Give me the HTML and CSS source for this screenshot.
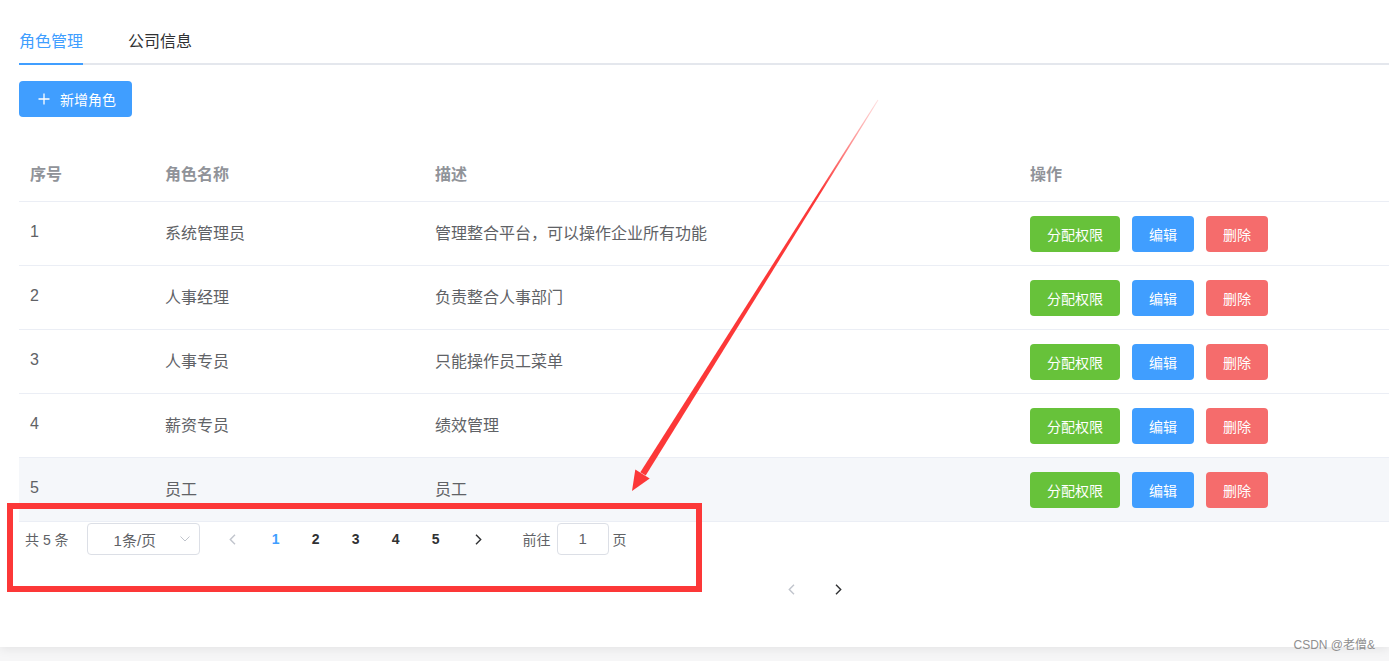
FILE: index.html
```html
<!DOCTYPE html>
<html>
<head>
  <title>角色管理</title>
  <link rel="stylesheet" href="styles.css">
</head>
<body>
  <div class="page">
    <div class="tabs">
      <div class="tab active">角色管理</div>
      <div class="tab">公司信息</div>
    </div>

    <div class="pane">
      <button class="btn btn-primary btn-add">
        <svg class="plus" width="12" height="12" viewBox="0 0 12 12"><path d="M6 0.5V11.5M0.5 6H11.5" stroke="#fff" stroke-width="1.3" fill="none"/></svg>
        新增角色
      </button>

      <table class="role-table">
        <colgroup>
          <col style="width:135px">
          <col style="width:270px">
          <col style="width:595px">
          <col style="width:370px">
        </colgroup>
        <thead>
          <tr><th>序号</th><th>角色名称</th><th>描述</th><th>操作</th></tr>
        </thead>
        <tbody>
          <tr>
            <td>1</td><td>系统管理员</td><td>管理整合平台，可以操作企业所有功能</td>
            <td><div class="ops"><button class="btn btn-success">分配权限</button><button class="btn btn-primary">编辑</button><button class="btn btn-danger">删除</button></div></td>
          </tr>
          <tr>
            <td>2</td><td>人事经理</td><td>负责整合人事部门</td>
            <td><div class="ops"><button class="btn btn-success">分配权限</button><button class="btn btn-primary">编辑</button><button class="btn btn-danger">删除</button></div></td>
          </tr>
          <tr>
            <td>3</td><td>人事专员</td><td>只能操作员工菜单</td>
            <td><div class="ops"><button class="btn btn-success">分配权限</button><button class="btn btn-primary">编辑</button><button class="btn btn-danger">删除</button></div></td>
          </tr>
          <tr>
            <td>4</td><td>薪资专员</td><td>绩效管理</td>
            <td><div class="ops"><button class="btn btn-success">分配权限</button><button class="btn btn-primary">编辑</button><button class="btn btn-danger">删除</button></div></td>
          </tr>
          <tr class="hover">
            <td>5</td><td>员工</td><td>员工</td>
            <td><div class="ops"><button class="btn btn-success">分配权限</button><button class="btn btn-primary">编辑</button><button class="btn btn-danger">删除</button></div></td>
          </tr>
        </tbody>
      </table>

      <div class="pager">
        <span class="total">共 5 条</span>
        <div class="sizes">
          <span>1条/页</span>
          <svg class="caret" width="10" height="6" viewBox="0 0 10 6"><path d="M0.5 0.5L5 5L9.5 0.5" stroke="#c0c4cc" stroke-width="1" fill="none"/></svg>
        </div>
        <button class="pg-btn prev disabled">
          <svg width="7" height="11" viewBox="0 0 7 11"><path d="M6 0.8L1.3 5.5L6 10.2" stroke="currentColor" stroke-width="1.4" fill="none"/></svg>
        </button>
        <ul class="pages">
          <li class="active">1</li>
          <li>2</li>
          <li>3</li>
          <li>4</li>
          <li>5</li>
        </ul>
        <button class="pg-btn next">
          <svg width="7" height="11" viewBox="0 0 7 11"><path d="M1 0.8L5.7 5.5L1 10.2" stroke="currentColor" stroke-width="1.4" fill="none"/></svg>
        </button>
        <span class="jump">前往<span class="jump-input">1</span>页</span>
      </div>

      <div class="pager pager-empty">
        <button class="pg-btn prev disabled">
          <svg width="7" height="11" viewBox="0 0 7 11"><path d="M6 0.8L1.3 5.5L6 10.2" stroke="currentColor" stroke-width="1.4" fill="none"/></svg>
        </button>
        <button class="pg-btn next">
          <svg width="7" height="11" viewBox="0 0 7 11"><path d="M1 0.8L5.7 5.5L1 10.2" stroke="currentColor" stroke-width="1.4" fill="none"/></svg>
        </button>
      </div>
    </div>
  </div>

  <div class="watermark">CSDN @老僧&amp;</div>

  <!-- annotation drawn over the screenshot -->
  <svg class="annot" width="1389" height="661" viewBox="0 0 1389 661">
    <defs>
      <linearGradient id="fade" gradientUnits="userSpaceOnUse" x1="878" y1="100" x2="820" y2="192">
        <stop offset="0" stop-color="#fc3838" stop-opacity="0.15"/>
        <stop offset="1" stop-color="#fc3838" stop-opacity="1"/>
      </linearGradient>
    </defs>
    <polygon points="878.4,100.2 877.6,99.8 640.3,472.2 645.7,475.6" fill="url(#fade)"/>
    <polygon points="632,491 635.3,469.5 649.7,478.6" fill="#fc3838"/>
    <rect x="10" y="506" width="689" height="83" fill="none" stroke="#fc3838" stroke-width="6"/>
  </svg>
</body>
</html>
```

FILE: styles.css
```css
html, body {
  margin: 0;
  padding: 0;
}

body {
  width: 1389px;
  height: 661px;
  overflow: hidden;
  position: relative;
  background: #f6f6f7;
  font-family: "Liberation Sans", "Noto Sans CJK SC", sans-serif;
  color: #606266;
}

.page {
  height: 647px;
  background: #fff;
  box-shadow: 0 2px 10px rgba(0, 0, 0, 0.08);
  overflow: hidden;
}

/* tabs */
.tabs {
  display: flex;
  margin-left: 19px;
  padding-top: 21px;
  border-bottom: 2px solid #e4e7ed;
}

.tab {
  height: 42px;
  line-height: 42px;
  margin-right: 45px;
  font-size: 16px;
  color: #303133;
  border-bottom: 2px solid transparent;
  margin-bottom: -2px;
}

.tab.active {
  color: #409eff;
  border-bottom-color: #409eff;
}

.pane {
  padding-left: 19px;
}

/* buttons */
.btn {
  display: inline-flex;
  align-items: center;
  justify-content: center;
  height: 36px;
  padding: 0 17px;
  border: none;
  border-radius: 4px;
  color: #fff;
  font-family: inherit;
  font-size: 14px;
  white-space: nowrap;
  cursor: pointer;
}

.btn-primary {
  background-color: #409eff;
}

.btn-success {
  background-color: #67c23a;
}

.btn-danger {
  background-color: #f56c6c;
}

.btn-add {
  margin-top: 16px;
  padding: 0 16px 0 19px;
}

.btn-add .plus {
  margin-right: 10px;
}

/* table */
.role-table {
  margin-top: 29px;
  width: 1370px;
  table-layout: fixed;
  border-collapse: collapse;
  font-size: 16px;
}

.role-table th {
  height: 53px;
  padding: 0 11px 2px;
  text-align: left;
  font-weight: bold;
  color: #909399;
  border-bottom: 1px solid #ebeef5;
}

.role-table td {
  height: 60px;
  padding: 0 11px 3px;
  color: #606266;
  border-bottom: 1px solid #ebeef5;
}

.role-table tr.hover td {
  background-color: #f5f7fa;
}

.ops {
  display: flex;
  gap: 12px;
  margin-top: 4px;
}

/* pagination */
.pager {
  display: flex;
  align-items: center;
  padding: 1px 6px;
  font-size: 14px;
  color: #606266;
}

.sizes {
  box-sizing: border-box;
  width: 113px;
  height: 32px;
  margin-left: 18px;
  padding-left: 26px;
  display: flex;
  align-items: center;
  border: 1px solid #dcdfe6;
  border-radius: 4px;
  font-size: 15px;
}

.sizes .caret {
  margin-left: auto;
  margin-right: 9px;
}

.pg-btn {
  width: 40px;
  height: 32px;
  padding: 0;
  border: none;
  background: none;
  color: #303133;
  display: flex;
  align-items: center;
  justify-content: center;
}

.pg-btn.disabled {
  color: #c0c4cc;
}

.pager .prev {
  margin-left: 13px;
  margin-right: 3px;
}

.pager .next {
  margin-left: 3px;
}

.pages {
  display: flex;
  list-style: none;
  margin: 0;
  padding: 0;
}

.pages li {
  width: 40px;
  height: 32px;
  line-height: 32px;
  text-align: center;
  font-weight: bold;
  color: #303133;
}

.pages li.active {
  color: #409eff;
}

.jump {
  display: flex;
  align-items: center;
  margin-left: 24px;
}

.jump-input {
  box-sizing: border-box;
  width: 52px;
  height: 32px;
  line-height: 30px;
  margin: 0 4px 0 6px;
  text-align: center;
  font-size: 15px;
  border: 1px solid #dcdfe6;
  border-radius: 4px;
}

.pager-empty {
  margin-top: 14px;
  padding-left: 752px;
  height: 36px;
}

.pager-empty .prev {
  margin-left: 0;
  margin-right: 7px;
}

.pager-empty .next {
  margin-left: 0;
}

.watermark {
  position: absolute;
  right: 14px;
  top: 635px;
  font-size: 12px;
  color: #8f8f8f;
}

.annot {
  position: absolute;
  left: 0;
  top: 0;
  pointer-events: none;
}
```
